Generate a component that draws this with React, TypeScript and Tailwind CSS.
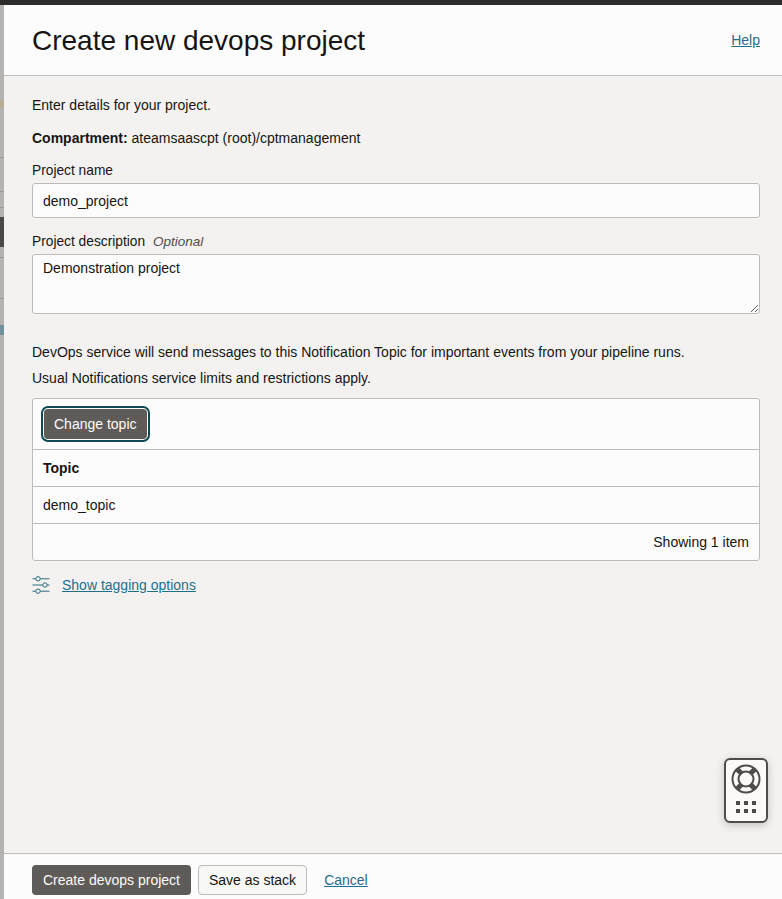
const font = "font-['Liberation_Sans',Arial,sans-serif]";

// Dimmed page that peeks out beside the panel
const LeftStrip = () => (
  <div className="w-[4px] shrink-0 flex flex-col bg-[#b4b3b2]">
    <div className="h-[95px]" />
    <div className="h-[8px] bg-[#b9ab9a]" />
    <div className="h-[49px]" />
    <div className="h-px bg-[#9a9998]" />
    <div className="h-[33px]" />
    <div className="h-px bg-[#9a9998]" />
    <div className="h-[15px]" />
    <div className="h-px bg-[#9a9998]" />
    <div className="h-[9px]" />
    <div className="h-[30px] bg-[#4a4847]" />
    <div className="h-[10px]" />
    <div className="h-px bg-[#9a9998]" />
    <div className="h-[40px]" />
    <div className="h-px bg-[#9a9998]" />
    <div className="h-[26px]" />
    <div className="h-[10px] bg-[#6f929e]" />
  </div>
);

const SlidersIcon = () => (
  <svg width="18" height="18" viewBox="0 0 18 18" fill="none" stroke="#2b6a7c" strokeWidth="1" className="shrink-0">
    <circle cx="6" cy="2.8" r="2.2" />
    <path d="M0.5 2.8H3.8M8.2 2.8H17.5" />
    <circle cx="13" cy="9" r="2.2" />
    <path d="M0.5 9H10.8M15.2 9H17.5" />
    <circle cx="6" cy="15.2" r="2.2" />
    <path d="M0.5 15.2H3.8M8.2 15.2H17.5" />
  </svg>
);

const HelpWidget = () => (
  <div className="absolute left-[724px] top-[758px] w-[44px] h-[65px] rounded-[6px] border-2 border-[#4f4c4a] bg-[#fbfaf9] shadow-[0_2px_8px_rgba(0,0,0,0.2)] flex flex-col items-center pt-[4px]">
    <svg width="30" height="30" viewBox="0 0 30 30" fill="none">
      <circle cx="15" cy="15" r="13.5" stroke="#4f4c4a" strokeWidth="2" />
      <circle cx="15" cy="15" r="7.5" stroke="#4f4c4a" strokeWidth="2" />
      <path d="M5 5.5L10 10.5M6.5 4L11.5 9M25 5.5L20 10.5M23.5 4L18.5 9M5 24.5L10 19.5M6.5 26L11.5 21M25 24.5L20 19.5M23.5 26L18.5 21" stroke="#4f4c4a" strokeWidth="3" />
    </svg>
    <div className="mt-[7px] grid grid-cols-3 gap-x-[4px] gap-y-[4px]">
      {[0, 1, 2, 3, 4, 5].map((i) => (
        <div key={i} className="w-[4px] h-[4px] bg-[#4f4c4a]" />
      ))}
    </div>
  </div>
);

export default function App() {
  return (
    <div className={`${font} relative h-[899px] w-[782px] overflow-hidden flex flex-col text-[14px] text-[#161513] bg-[#f1efed]`}>
      <div className="h-[5px] shrink-0 bg-[#2e2c2b]" />
      <div className="flex flex-1 min-h-0">
        <LeftStrip />
        <div className="flex-1 flex flex-col min-w-0">
          {/* Header */}
          <div className="h-[71px] shrink-0 bg-[#fcfcfc] border-b border-[#bdbcbb] flex items-center justify-between pl-[28px] pr-[22px]">
            <h1 className="text-[28px] leading-[36px] pt-[2px] text-[#161513]">Create new devops project</h1>
            <a href="#" className="text-[#1f6f8b] underline">Help</a>
          </div>

          {/* Body */}
          <div className="flex-1 min-h-0 bg-[#f3f2f1] pl-[28px] pr-[22px] pt-[19px]">
            <p className="leading-[20px]">Enter details for your project.</p>
            <p className="leading-[20px] mt-[13px]">
              <b>Compartment:</b> ateamsaascpt (root)/cptmanagement
            </p>

            <label className="block leading-[20px] mt-[13px] text-[13.75px]">Project name</label>
            <input
              defaultValue="demo_project"
              className="block w-full h-[35px] mt-[2px] px-[10px] bg-[#fcfcfc] border border-[#bdbcbb] rounded-[3px] outline-none"
            />

            <label className="block leading-[20px] mt-[14px] text-[13.75px]">
              Project description <i className="ml-[4px] text-[13.5px] text-[#4f4c4a]">Optional</i>
            </label>
            <textarea
              defaultValue="Demonstration project"
              className="block w-full h-[60px] mt-[2px] px-[10px] py-[4px] leading-[18px] bg-[#fcfcfc] border border-[#bdbcbb] rounded-[3px] outline-none"
            />

            <p className="leading-[20px] mt-[28px]">
              DevOps service will send messages to this Notification Topic for important events from your pipeline runs.
            </p>
            <p className="leading-[20px] mt-[6px]">Usual Notifications service limits and restrictions apply.</p>

            {/* Topic table */}
            <div className="mt-[10px] bg-[#fcfcfc] border border-[#bdbcbb] rounded-[3px]">
              <div className="h-[51px] flex items-center px-[10px] border-b border-[#bdbcbb]">
                <button className="h-[30px] ml-px px-[10px] rounded-[4px] bg-[#5f5b58] text-[#fcfcfc] ring-1 ring-[#fcfcfc] outline-2 outline-offset-1 outline-[#0f4a52]">
                  Change topic
                </button>
              </div>
              <div className="h-[37px] flex items-center px-[10px] border-b border-[#bdbcbb] font-bold">Topic</div>
              <div className="h-[37px] flex items-center px-[10px] border-b border-[#bdbcbb]">demo_topic</div>
              <div className="h-[36px] flex items-center justify-end px-[10px]">Showing 1 item</div>
            </div>

            <div className="mt-[14px] flex items-center gap-[12px] h-[20px]">
              <SlidersIcon />
              <a href="#" className="text-[#1f6f8b] underline">Show tagging options</a>
            </div>
          </div>

          {/* Footer */}
          <div className="h-[46px] shrink-0 bg-[#fcfcfc] border-t border-[#bdbcbb] flex items-start gap-[7px] pl-[28px] pt-[11px]">
            <button className="h-[30px] px-[11px] rounded-[4px] bg-[#5f5b58] text-[#fcfcfc]">Create devops project</button>
            <button className="h-[30px] px-[10px] rounded-[4px] bg-[#f8f8f7] border border-[#bdbcbb] text-[#161513]">Save as stack</button>
            <a href="#" className="ml-[10px] leading-[30px] text-[#1f6f8b] underline">Cancel</a>
          </div>
        </div>
      </div>
      <HelpWidget />
    </div>
  );
}
